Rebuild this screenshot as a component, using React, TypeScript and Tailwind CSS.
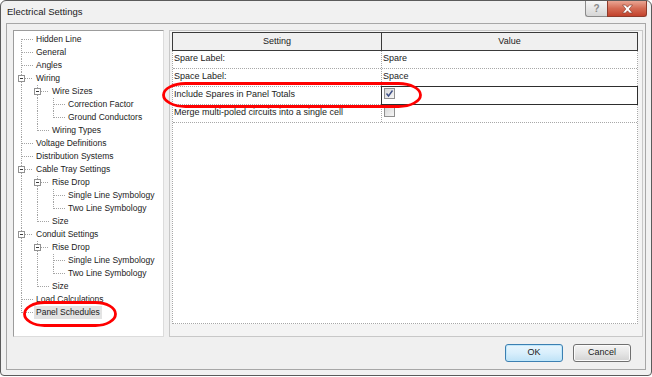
import React from "react";

type Row = {
  t: string;
  l: number;
  exp?: boolean;
  g: boolean[];
  last?: boolean;
  first?: boolean;
  sel?: boolean;
};

const rows: Row[] = [
  { t: "Hidden Line", l: 0, g: [], first: true },
  { t: "General", l: 0, g: [] },
  { t: "Angles", l: 0, g: [] },
  { t: "Wiring", l: 0, exp: true, g: [] },
  { t: "Wire Sizes", l: 1, exp: true, g: [true] },
  { t: "Correction Factor", l: 2, g: [true, true] },
  { t: "Ground Conductors", l: 2, g: [true, true], last: true },
  { t: "Wiring Types", l: 1, g: [true], last: true },
  { t: "Voltage Definitions", l: 0, g: [] },
  { t: "Distribution Systems", l: 0, g: [] },
  { t: "Cable Tray Settings", l: 0, exp: true, g: [] },
  { t: "Rise Drop", l: 1, exp: true, g: [true] },
  { t: "Single Line Symbology", l: 2, g: [true, true] },
  { t: "Two Line Symbology", l: 2, g: [true, true], last: true },
  { t: "Size", l: 1, g: [true], last: true },
  { t: "Conduit Settings", l: 0, exp: true, g: [] },
  { t: "Rise Drop", l: 1, exp: true, g: [true] },
  { t: "Single Line Symbology", l: 2, g: [true, true] },
  { t: "Two Line Symbology", l: 2, g: [true, true], last: true },
  { t: "Size", l: 1, g: [true], last: true },
  { t: "Load Calculations", l: 0, g: [] },
  { t: "Panel Schedules", l: 0, g: [], last: true, sel: true },
];

const LINE = "#a4a4a4";

function TreeLines({ r }: { r: Row }) {
  const w = 20 + 16 * r.l;
  const p = 7 + 16 * r.l;
  return (
    <svg width={w} height={13} className="shrink-0" shapeRendering="crispEdges">
      {r.g.map((on, k) =>
        on ? (
          <line
            key={k}
            x1={7 + 16 * k + 0.5}
            x2={7 + 16 * k + 0.5}
            y1={0}
            y2={13}
            stroke={LINE}
            strokeDasharray="1 1"
          />
        ) : null
      )}
      <line
        x1={p + 0.5}
        x2={p + 0.5}
        y1={r.first ? 6 : 0}
        y2={r.last ? 7 : 13}
        stroke={LINE}
        strokeDasharray="1 1"
      />
      <line
        x1={r.exp ? p + 4 : p + 1}
        x2={w - 1}
        y1={6.5}
        y2={6.5}
        stroke={LINE}
        strokeDasharray="1 1"
      />
      {r.exp && (
        <g>
          <rect x={p - 2.5} y={3.5} width={6} height={6} fill="#fff" stroke="#929292" />
          <line x1={p - 1} x2={p + 2} y1={6.5} y2={6.5} stroke="#3a3a3a" />
        </g>
      )}
    </svg>
  );
}

function CheckBox({ checked }: { checked?: boolean }) {
  return (
    <span className="ml-[1px] flex h-[11px] w-[11px] items-center justify-center border border-[#8f8f8f] bg-linear-to-br from-[#d6d6d6] to-[#f6f6f6]">
      {checked && (
        <svg width="9" height="9" viewBox="0 0 9 9">
          <path d="M1.5 4.5 L3.5 7 L7.5 1.5" fill="none" stroke="#3d4f86" strokeWidth="1.4" />
        </svg>
      )}
    </span>
  );
}

const gridRows: { s: string; v: React.ReactNode; sel?: boolean }[] = [
  { s: "Spare Label:", v: "Spare" },
  { s: "Space Label:", v: "Space" },
  { s: "Include Spares in Panel Totals", v: <CheckBox checked />, sel: true },
  { s: "Merge multi-poled circuits into a single cell", v: <CheckBox /> },
];

export default function App() {
  return (
    <div
      className="relative h-[377px] w-[652px] overflow-hidden bg-white text-[#1b1b1b]"
      style={{ fontFamily: '"Liberation Sans", Arial, sans-serif' }}
    >
      {/* window */}
      <div className="flex h-[376px] w-[652px] flex-col rounded-t-[6px] rounded-b-[4px] border border-[#5b5b5b] bg-[#f1f1f1]">
        {/* title bar */}
        <div className="flex h-[22px] shrink-0 justify-between pl-[6px] pr-[4px]">
          <div className="flex items-center text-[9.5px] text-[#1a1a1a]">Electrical Settings</div>
          <div className="flex self-start">
            <div className="flex h-[16px] w-[22px] items-center justify-center rounded-bl-[3px] border border-t-0 border-r-0 border-[#8b8b8b] bg-linear-to-b from-[#f6f6f6] to-[#d6d6d6] text-[10px] font-bold leading-none text-[#8a8a8a]">
              ?
            </div>
            <div className="flex h-[16px] w-[40px] items-center justify-center rounded-br-[3px] border border-t-0 border-[#8d3b2b] bg-linear-to-b from-[#e9a593] via-[#d46a53] to-[#c2412b]">
              <svg width="13" height="10" viewBox="0 0 13 10">
                <path
                  d="M1.5 1 H4.5 L6.5 3.2 L8.5 1 H11.5 L8.2 5 L11.5 9 H8.5 L6.5 6.8 L4.5 9 H1.5 L4.8 5 Z"
                  fill="#ffffff"
                  stroke="#7a3325"
                  strokeWidth="0.6"
                />
              </svg>
            </div>
          </div>
        </div>

        {/* client area */}
        <div className="mx-[5px] mb-[5px] flex flex-1 flex-col border border-[#a7a7a7] bg-[#f0f0f0] pl-[6px] pr-[2px] pt-[6px] pb-[7px]">
          <div className="flex h-[307px] gap-[5px]">
            {/* tree */}
            <div className="h-[307px] w-[151px] shrink-0 border border-t-[#9c9c9c] border-l-[#9c9c9c] border-r-[#dcdcdc] border-b-[#dcdcdc] bg-white pt-[2px]">
              {rows.map((r, i) => (
                <div key={i} className="flex h-[13px] items-center">
                  <TreeLines r={r} />
                  <span
                    className={
                      "whitespace-nowrap px-[2px] text-[8.5px] leading-[13px] " +
                      (r.sel ? "bg-[#e3e3e3]" : "")
                    }
                  >
                    {r.t}
                  </span>
                </div>
              ))}
            </div>

            {/* grid */}
            <div className="flex h-[307px] flex-1 flex-col border border-[#c8c8c8] bg-[#f4f4f4] pl-[2px] pr-[4px] pt-[1px] pb-[12px]">
              <div className="flex h-[19px] shrink-0 border border-[#3a3a3a] bg-[#f0f0f0] text-[9px]">
                <div className="flex w-[209px] items-center justify-center border-r border-[#3a3a3a]">Setting</div>
                <div className="flex flex-1 items-center justify-center">Value</div>
              </div>
              <div className="flex-1 border border-t-0 border-dotted border-[#a8a8a8] bg-white">
                {gridRows.map((g, i) => (
                  <div key={i} className="flex h-[18px] border-b border-dotted border-[#a8a8a8] text-[9px]">
                    <div className="w-[209px] overflow-hidden whitespace-nowrap border-r border-dotted border-[#a8a8a8] pl-[1px] leading-[14px]">
                      {g.s}
                    </div>
                    <div
                      className={
                        "flex flex-1 items-start pl-[1px] leading-[14px] " +
                        (typeof g.v === "string" ? "" : "pt-[1px] ") +
                        (g.sel ? "outline outline-[#2e2e2e]" : "")
                      }
                    >
                      {g.v}
                    </div>
                  </div>
                ))}
              </div>
            </div>
          </div>

          {/* buttons */}
          <div className="mt-[7px] flex h-[18px] justify-end gap-[10px] pr-[12px]">
            <button className="h-[18px] w-[58px] rounded-[3px] border border-[#3c7fb1] bg-linear-to-b from-[#e8f5fd] via-[#d9effc] to-[#bfe3f7] text-[9px] text-[#1a1a1a] shadow-[inset_0_0_0_1px_#bfe7fb]">
              OK
            </button>
            <button className="h-[18px] w-[58px] rounded-[3px] border border-[#707070] bg-linear-to-b from-[#f4f4f4] via-[#e6e6e6] to-[#d3d3d3] text-[9px] text-[#1a1a1a] shadow-[inset_0_0_0_1px_#fbfbfb]">
              Cancel
            </button>
          </div>
        </div>
      </div>

      {/* red annotation ellipses */}
      <svg
        className="pointer-events-none absolute left-0 top-0"
        width="652"
        height="377"
        viewBox="0 0 652 377"
      >
        <rect x="24.5" y="302.5" width="91" height="23" rx="20" ry="11.5" fill="none" stroke="#ff0000" strokeWidth="2.8" />
        <rect x="163.5" y="83.5" width="257" height="23" rx="22" ry="11.5" fill="none" stroke="#ff0000" strokeWidth="2.8" />
      </svg>
    </div>
  );
}
